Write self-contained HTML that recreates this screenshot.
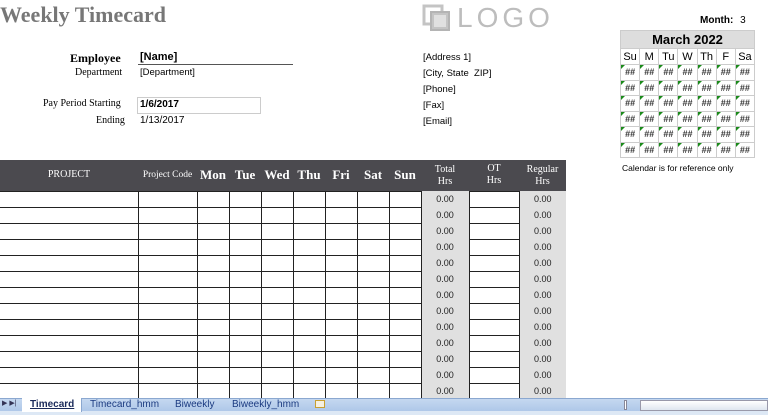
<!DOCTYPE html>
<html><head><meta charset="utf-8"><style>
*{margin:0;padding:0;box-sizing:border-box}
body{width:768px;height:415px;overflow:hidden;background:#fff;position:relative;font-family:"Liberation Sans",sans-serif}
.a{position:absolute;white-space:nowrap}
.serif{font-family:"Liberation Serif",serif}
table.t{position:absolute;left:0;top:160px;border-collapse:collapse;table-layout:fixed}
.t th{background:#4b4a4f;color:#fff;font-family:"Liberation Serif",serif;font-weight:normal;height:31px;font-size:10px;line-height:12px;padding:0}
.t th.d{font-weight:bold;font-size:13px}
.t td{height:16px;border:1px solid #222;font-size:9px;text-align:center;padding:0}
.t td.g{background:#e0e0e0;border-top:none;border-bottom:none;color:#222}
table.c{position:absolute;left:620px;top:30px;border-collapse:collapse;table-layout:fixed;width:135px}
.c td{border:1px solid #ccc;text-align:center;font-size:11px;padding:0;position:relative}
.c td.h{height:15.5px;font-size:9px;font-weight:bold;color:#333}
.c td.h:before{content:"";position:absolute;left:0;top:0;border-top:4px solid #1a8a1a;border-right:4px solid transparent}
</style></head><body>
<div class="a serif" style="left:0;top:2px;font-size:22px;font-weight:bold;color:#777">Weekly Timecard</div>

<svg class="a" style="left:422px;top:4px" width="32" height="28"><rect x="2" y="2" width="18" height="18" fill="none" stroke="#c4c4c4" stroke-width="3"/><rect x="9" y="8" width="18" height="18" fill="#c4c4c4" stroke="#b4b4b4" stroke-width="2"/><rect x="12" y="11" width="12" height="12" fill="#e0e0e0"/></svg>
<div class="a" style="left:457px;top:2px;font-size:28px;color:#bdbdbd;letter-spacing:4px">LOGO</div>

<div class="a serif" style="left:70px;top:51px;font-size:12px;font-weight:bold">Employee</div>
<div class="a" style="left:140px;top:51px;font-size:11px;font-weight:bold">[Name]</div>
<div class="a" style="left:138px;top:64px;width:155px;border-top:1px solid #555"></div>
<div class="a serif" style="left:75px;top:67px;font-size:10px">Department</div>
<div class="a" style="left:140px;top:67px;font-size:9.5px">[Department]</div>
<div class="a serif" style="left:43px;top:98px;font-size:10px">Pay Period Starting</div>
<div class="a" style="left:137px;top:97px;width:124px;height:17px;border:1px solid #ccc"></div>
<div class="a" style="left:140px;top:99px;font-size:10px;font-weight:bold">1/6/2017</div>
<div class="a serif" style="left:96px;top:115px;font-size:10px">Ending</div>
<div class="a" style="left:140px;top:115px;font-size:10px">1/13/2017</div>

<div class="a" style="left:423px;top:50px;font-size:9.5px;line-height:16px">[Address 1]<br>[City, State &nbsp;ZIP]<br>[Phone]<br>[Fax]<br>[Email]</div>

<div class="a" style="left:700px;top:15px;font-size:10px;font-weight:bold">Month: <span style="font-weight:normal;margin-left:4px">3</span></div>
<table class="c">
<tr><td colspan="7" style="background:#ddd;height:18px;font-size:13px;font-weight:bold">March 2022</td></tr>
<tr><td style="height:16px">Su</td><td>M</td><td>Tu</td><td>W</td><td>Th</td><td>F</td><td>Sa</td></tr>
<tr><td class="h">##</td><td class="h">##</td><td class="h">##</td><td class="h">##</td><td class="h">##</td><td class="h">##</td><td class="h">##</td></tr>
<tr><td class="h">##</td><td class="h">##</td><td class="h">##</td><td class="h">##</td><td class="h">##</td><td class="h">##</td><td class="h">##</td></tr>
<tr><td class="h">##</td><td class="h">##</td><td class="h">##</td><td class="h">##</td><td class="h">##</td><td class="h">##</td><td class="h">##</td></tr>
<tr><td class="h">##</td><td class="h">##</td><td class="h">##</td><td class="h">##</td><td class="h">##</td><td class="h">##</td><td class="h">##</td></tr>
<tr><td class="h">##</td><td class="h">##</td><td class="h">##</td><td class="h">##</td><td class="h">##</td><td class="h">##</td><td class="h">##</td></tr>
<tr><td class="h">##</td><td class="h">##</td><td class="h">##</td><td class="h">##</td><td class="h">##</td><td class="h">##</td><td class="h">##</td></tr>
</table>
<div class="a" style="left:622px;top:163px;font-size:8.5px">Calendar is for reference only</div>

<table class="t">
<colgroup><col style="width:138px"><col style="width:59px"><col style="width:32px"><col style="width:32px"><col style="width:32px"><col style="width:32px"><col style="width:32px"><col style="width:32px"><col style="width:32px"><col style="width:48px"><col style="width:50px"><col style="width:47px"></colgroup>
<tr><th>PROJECT</th><th style="font-size:9.5px">Project Code</th><th class="d">Mon</th><th class="d">Tue</th><th class="d">Wed</th><th class="d">Thu</th><th class="d">Fri</th><th class="d">Sat</th><th class="d">Sun</th><th>Total<br>Hrs</th><th>OT<br>Hrs</th><th>Regular<br>Hrs</th></tr>
<tbody>
<tr><td style="border-left:none"></td><td></td><td></td><td></td><td></td><td></td><td></td><td></td><td></td><td class="g">0.00</td><td></td><td class="g" style="border-right:none">0.00</td></tr>
<tr><td style="border-left:none"></td><td></td><td></td><td></td><td></td><td></td><td></td><td></td><td></td><td class="g">0.00</td><td></td><td class="g" style="border-right:none">0.00</td></tr>
<tr><td style="border-left:none"></td><td></td><td></td><td></td><td></td><td></td><td></td><td></td><td></td><td class="g">0.00</td><td></td><td class="g" style="border-right:none">0.00</td></tr>
<tr><td style="border-left:none"></td><td></td><td></td><td></td><td></td><td></td><td></td><td></td><td></td><td class="g">0.00</td><td></td><td class="g" style="border-right:none">0.00</td></tr>
<tr><td style="border-left:none"></td><td></td><td></td><td></td><td></td><td></td><td></td><td></td><td></td><td class="g">0.00</td><td></td><td class="g" style="border-right:none">0.00</td></tr>
<tr><td style="border-left:none"></td><td></td><td></td><td></td><td></td><td></td><td></td><td></td><td></td><td class="g">0.00</td><td></td><td class="g" style="border-right:none">0.00</td></tr>
<tr><td style="border-left:none"></td><td></td><td></td><td></td><td></td><td></td><td></td><td></td><td></td><td class="g">0.00</td><td></td><td class="g" style="border-right:none">0.00</td></tr>
<tr><td style="border-left:none"></td><td></td><td></td><td></td><td></td><td></td><td></td><td></td><td></td><td class="g">0.00</td><td></td><td class="g" style="border-right:none">0.00</td></tr>
<tr><td style="border-left:none"></td><td></td><td></td><td></td><td></td><td></td><td></td><td></td><td></td><td class="g">0.00</td><td></td><td class="g" style="border-right:none">0.00</td></tr>
<tr><td style="border-left:none"></td><td></td><td></td><td></td><td></td><td></td><td></td><td></td><td></td><td class="g">0.00</td><td></td><td class="g" style="border-right:none">0.00</td></tr>
<tr><td style="border-left:none"></td><td></td><td></td><td></td><td></td><td></td><td></td><td></td><td></td><td class="g">0.00</td><td></td><td class="g" style="border-right:none">0.00</td></tr>
<tr><td style="border-left:none"></td><td></td><td></td><td></td><td></td><td></td><td></td><td></td><td></td><td class="g">0.00</td><td></td><td class="g" style="border-right:none">0.00</td></tr>
<tr><td style="border-left:none"></td><td></td><td></td><td></td><td></td><td></td><td></td><td></td><td></td><td class="g">0.00</td><td></td><td class="g" style="border-right:none">0.00</td></tr>
</tbody></table>

<div class="a" style="left:0;top:398px;width:768px;height:17px;background:linear-gradient(#c5d8f0,#a7c2e6);border-top:1px solid #8ba8d0"></div>
<div class="a" style="left:0;top:411px;width:768px;height:4px;background:#dde8f5"></div>
<div class="a" style="left:2px;top:399px;font-size:7px;color:#335">▶ ▶|</div>
<div class="a" style="left:22px;top:398px;width:60px;height:14px;background:#fff;border-right:1px solid #8ba8d0"></div>
<div class="a" style="left:30px;top:399px;font-size:10px;font-weight:bold;color:#1a2a5a;text-decoration:underline">Timecard</div>
<div class="a" style="left:90px;top:399px;font-size:10px;color:#1a3a80">Timecard_hmm</div>
<div class="a" style="left:175px;top:399px;font-size:10px;color:#1a3a80">Biweekly</div>
<div class="a" style="left:232px;top:399px;font-size:10px;color:#1a3a80">Biweekly_hmm</div>
<div class="a" style="left:315px;top:400px;width:10px;height:8px;background:#f5f0e0;border:1px solid #c9a030"></div>
<div class="a" style="left:624px;top:400px;width:3px;height:10px;background:#fff;border:1px solid #889"></div>
<div class="a" style="left:640px;top:400px;width:128px;height:11px;background:linear-gradient(#fff,#dfe6ef);border:1px solid #99a"></div>
</body></html>
